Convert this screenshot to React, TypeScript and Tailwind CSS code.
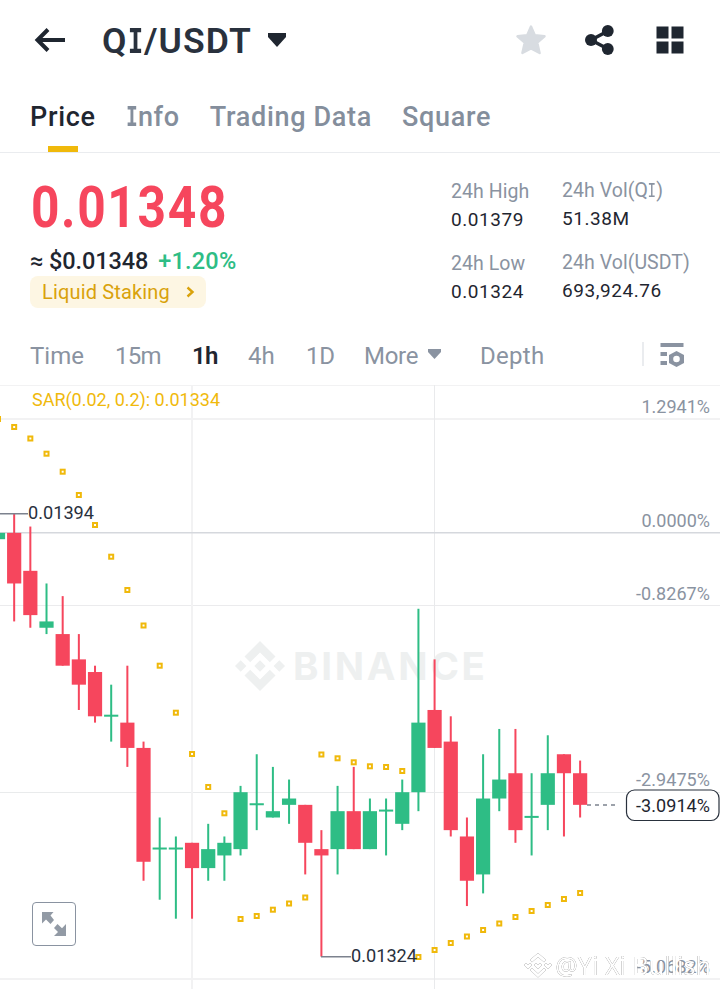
import React, { useState } from "react";

type Candle = [open: number, close: number, high: number, low: number];

// prices are in units of 0.00001, oldest first
const candles: Candle[] = [
  [1390, 1391, 1391, 1390],
  [1391, 1383, 1394, 1377],
  [1385, 1378, 1392, 1376],
  [1376, 1377, 1383, 1375],
  [1375, 1370, 1381, 1370],
  [1371, 1367, 1375, 1363],
  [1369, 1362, 1370, 1361],
  [1362, 1362, 1367, 1358],
  [1361, 1357, 1370, 1354],
  [1357, 1339, 1358, 1336],
  [1341, 1341, 1346, 1333],
  [1341, 1341, 1343, 1330],
  [1342, 1338, 1342, 1330],
  [1338, 1341, 1345, 1336],
  [1340, 1342, 1343, 1336],
  [1341, 1350, 1351, 1340],
  [1348, 1348, 1356, 1344],
  [1346, 1347, 1354, 1346],
  [1348, 1349, 1352, 1345],
  [1348, 1342, 1348, 1337],
  [1341, 1340, 1344, 1324],
  [1341, 1347, 1351, 1337],
  [1347, 1341, 1354, 1341],
  [1341, 1347, 1349, 1341],
  [1347, 1347, 1349, 1340],
  [1345, 1350, 1352, 1344],
  [1350, 1361, 1379, 1347],
  [1363, 1357, 1371, 1357],
  [1358, 1344, 1362, 1343],
  [1343, 1336, 1346, 1332],
  [1337, 1349, 1356, 1334],
  [1349, 1352, 1360, 1347],
  [1353, 1344, 1360, 1342],
  [1346, 1346, 1353, 1340],
  [1348, 1353, 1359, 1344],
  [1356, 1353, 1356, 1343],
  [1353, 1348, 1355, 1346],
];

// parabolic SAR, one y per candle
const sar = [
  34, 42, 53.5, 68.7, 86.7, 110, 140, 171.7, 205, 240.5, 280.7, 327.7, 369, 402, 428.3, 534, 531, 524.7, 518.5,
  512.5, 369.5, 373.3, 377.3, 381.3, 382, 386, 572, 565, 558, 551.5, 545, 538.5, 532, 526, 520, 514, 508,
];

const scaleLabels = [
  { y: 28, text: "1.2941%" },
  { y: 142, text: "0.0000%" },
  { y: 215, text: "-0.8267%" },
  { y: 401, text: "-2.9475%" },
  { y: 588, text: "-5.0682%" },
];

const tabs = ["Price", "Info", "Trading Data", "Square"];

const candleX = (i: number) => -2 + i * 16.17;
const priceY = (p: number) => 128.9 + (1394 - p) * 6.325;

// capital I with slab serifs, the rest of the string stays in the UI font
function SlabI({ text, bold }: { text: string; bold?: boolean }) {
  const at = text.indexOf("I");
  if (at < 0) return <>{text}</>;
  return (
    <span className="whitespace-nowrap">
      {text.slice(0, at)}
      <span
        className={`mx-[-0.08em] inline-block scale-x-75 font-['DejaVu_Sans_Mono',monospace] text-[0.97em] leading-none ${
          bold ? "font-bold" : "font-normal"
        }`}
      >
        I
      </span>
      {text.slice(at + 1)}
    </span>
  );
}

function BackIcon() {
  return (
    <svg width="32" height="26" viewBox="0 0 32 26" fill="none" stroke="#1f2630" strokeWidth="4">
      <path d="M2.5 13H31M14 2.5L3.5 13L14 23.5" />
    </svg>
  );
}

function Header() {
  return (
    <header className="flex h-20 items-center pl-[34px] pr-9 text-[#1f2630]">
      <BackIcon />
      <h1 className="mt-1 ml-[36px] w-[152px] text-[35.5px] leading-none font-semibold tracking-[1.1px] whitespace-nowrap text-[#29313d]">
        <SlabI text="QI/USDT" bold />
      </h1>
      <svg className="ml-[13px]" width="20" height="14" viewBox="0 0 20 14" fill="currentColor">
        <path d="M1 0H19V4L10 14L1 4Z" />
      </svg>
      <svg className="ml-auto" width="30" height="30" viewBox="0 0 30 30">
        <path
          d="M15 1.5L18.8 10.2L28.5 11.3L21.3 17.7L23.6 28L15 23.5L6.4 28L8.7 17.7L1.5 11.3L11.2 10.2Z"
          fill="#d8dce1"
          stroke="#d8dce1"
          strokeWidth="2.4"
          strokeLinejoin="round"
        />
      </svg>
      <svg className="ml-[39px]" width="30" height="30" viewBox="0 0 30 30" fill="currentColor">
        <path d="M6 15L23 6M6 15L23 24" stroke="currentColor" strokeWidth="3.6" />
        <circle cx="6" cy="15" r="6" />
        <circle cx="22.8" cy="6" r="5.9" />
        <circle cx="22.8" cy="24" r="5.9" />
      </svg>
      <svg className="ml-[41px]" width="28" height="28" viewBox="0 0 28 28" fill="currentColor">
        <path d="M.5 .5H12.5V12.5H.5ZM15.5 .5H27.5V12.5H15.5ZM.5 15.5H12.5V27.5H.5ZM15.5 15.5H27.5V27.5H15.5Z" />
      </svg>
    </header>
  );
}

function Stat({ label, value }: { label: string; value: string }) {
  return (
    <div className="h-[72px] whitespace-nowrap">
      <div className="text-[19.5px] leading-7 tracking-[0.05px] text-[#8a93a1]">
        <SlabI text={label} />
      </div>
      <div className="text-[19px] leading-7 tracking-[0.55px] text-[#1f2630]">{value}</div>
    </div>
  );
}

function Summary() {
  return (
    <section className="flex h-[174px]">
      <div className="w-[451px] pl-[30px]">
        <div className="mt-[23px] h-[64px] w-fit origin-left scale-x-88 pl-[1px] text-[56.5px] leading-[64px] font-bold tracking-[1.9px] text-[#f6465d]">
          0.01348
        </div>
        <div className="mt-2 flex h-7 items-center gap-2.5 text-[23.5px] font-medium tracking-[-0.1px] whitespace-nowrap">
          <span className="text-[#1f2630]">≈ $0.01348</span>
          <span className="tracking-[0.2px] text-[#2ebd85]">+1.20%</span>
        </div>
        <button className="flex h-8 w-44 items-center rounded-lg bg-[#fdf6e3] pl-3 text-[20px] tracking-[0.15px] text-[#d9a20b]">
          Liquid Staking
          <svg className="mr-[11px] ml-auto" width="9" height="12" viewBox="0 0 9 12" fill="none" stroke="currentColor" strokeWidth="2.4">
            <path d="M1.5 1.5L6.5 6L1.5 10.5" />
          </svg>
        </button>
      </div>
      <div className="w-[111px] pt-[25px]">
        <Stat label="24h High" value="0.01379" />
        <Stat label="24h Low" value="0.01324" />
      </div>
      <div className="pt-6">
        <Stat label="24h Vol(QI)" value="51.38M" />
        <Stat label="24h Vol(USDT)" value="693,924.76" />
      </div>
    </section>
  );
}

const intervals = [
  { name: "Time", width: "w-[85px]" },
  { name: "15m", width: "w-[77px] tracking-[-0.8px]" },
  { name: "1h", width: "w-14 tracking-[-0.8px]" },
  { name: "4h", width: "w-[58px]" },
  { name: "1D", width: "w-[58px] tracking-[-0.3px]" },
];

function IntervalBar() {
  const [interval, setInterval] = useState("1h");

  return (
    <div className="flex h-[58px] items-center pl-[30px] text-[24px] whitespace-nowrap text-[#8a93a1]">
      {intervals.map(({ name, width }) => (
        <button
          key={name}
          onClick={() => setInterval(name)}
          className={`${width} text-left ${interval === name ? "font-semibold text-[#1f2630]" : ""}`}
        >
          {name}
        </button>
      ))}
      <button className="flex w-[116px] items-center gap-[9px] tracking-[-0.3px]">
        More
        <svg className="-mt-1" width="14" height="10" viewBox="0 0 14 10" fill="currentColor">
          <path d="M1 0H14V3L7.5 10L1 3Z" />
        </svg>
      </button>
      <button className="tracking-[0.3px]">Depth</button>
      <div className="mb-1 ml-auto h-6 w-0.5 bg-[#eaecef]" />
      <svg className="mr-9 mb-0.5 ml-4" width="24" height="24" viewBox="0 0 24 24" fill="currentColor">
        <path d="M.5 0H23.5V4H.5ZM.5 9H7V13H.5ZM.5 18H7V22H.5Z" />
        <path d="M16.500 8L24 12V20L16.500 24L9 20V12ZM16.500 12.700A3.300 3.300 0 1 0 16.500 19.300A3.300 3.300 0 1 0 16.500 12.700Z" fillRule="evenodd" />
      </svg>
    </div>
  );
}

function Chart() {
  return (
    <div className="relative h-[604px] overflow-hidden">
      <svg className="block font-['Roboto',sans-serif] text-[18px]" width="720" height="604" viewBox="0 0 720 604">
        <g fill="#f2f2f3">
          <rect x="0" y="-1" width="720" height="2" />
          <rect x="0" y="33" width="720" height="2" />
          <rect x="0" y="220" width="720" height="1" fill="#ebebed" />
          <rect x="0" y="407" width="720" height="1" fill="#e9ebec" />
          <rect x="0" y="593" width="720" height="2" />
          <rect x="191" y="0" width="2" height="604" />
          <rect x="434" y="0" width="1" height="604" fill="#e9eaec" />
        </g>
        <rect x="0" y="147" width="720" height="1.5" fill="#d5d8dd" />

        <g fill="#eef0f0">
          <path
            transform="translate(235 256)"
            d="M25 0L40.5 15.5L34.8 21.2L25 11.4L15.2 21.2L9.5 15.5ZM25 50L40.5 34.5L34.8 28.8L25 38.6L15.2 28.8L9.5 34.5ZM0 25L5.7 19.3L11.4 25L5.7 30.7ZM38.6 25L44.3 19.3L50 25L44.3 30.7ZM19.3 25L25 19.3L30.7 25L25 30.7Z"
          />
          <text x="293" y="295" textLength="192" className="font-['Inter',sans-serif] text-[38.5px] font-bold">
            BINANCE
          </text>
        </g>

        {candles.map(([open, close, high, low], i) => {
          const x = candleX(i);
          const top = priceY(Math.max(open, close));
          const height = Math.abs(open - close) * 6.325;
          return (
            <g key={i} fill={close >= open ? "#2ebd85" : "#f6465d"}>
              <rect x={x - 1} y={priceY(high)} width="2" height={(high - low) * 6.325} />
              <rect x={x - 7.1} y={height ? top : top - 1.6} width="14.2" height={height || 2} />
            </g>
          );
        })}

        {sar.map((y, i) => (
          <rect key={i} x={candleX(i) - 2} y={y - 2} width="4" height="4" fill="#fff" stroke="#f0b90b" strokeWidth="2" />
        ))}

        <g fill="#7c828e">
          <rect x="0" y="128" width="28" height="1.5" />
          <rect x="321" y="571" width="30" height="1.5" />
        </g>
        <g fill="#29313d">
          <text x="28" y="134" textLength="66" lengthAdjust="spacingAndGlyphs">0.01394</text>
          <text x="351" y="577" textLength="66" lengthAdjust="spacingAndGlyphs">0.01324</text>
        </g>
        <text x="32" y="21" textLength="188" fill="#f0b90b">SAR(0.02, 0.2): 0.01334</text>

        <g fill="#8a93a1" textAnchor="end">
          {scaleLabels.map(({ y, text }) => (
            <text key={text} x="710" y={y} textLength={text.startsWith("-") ? 74 : 68.5}>{text}</text>
          ))}
        </g>
        <path d="M587 420H617" stroke="#7c828e" strokeWidth="1.5" strokeDasharray="4 4" />
        <rect x="626.5" y="405" width="92.5" height="30.5" rx="8" fill="#fff" stroke="#29313d" strokeWidth="1.2" />
        <text x="636" y="427" textLength="74" fill="#1f2630">-3.0914%</text>
      </svg>

      <button className="absolute top-[517px] left-8 flex h-11 w-11 items-center justify-center rounded border border-[#8a93a1] bg-white text-[#929aa5]">
        <svg width="24" height="24" viewBox="0 0 24 24" fill="currentColor">
          <path d="M0 0H11.5L8.5 3.5L12 8L8.5 12L4 7.5L0 11.5ZM24 24H12L16 20L12 16L15.5 12L20 16.2L24 12Z" />
        </svg>
      </button>

      <div className="absolute top-[564px] right-[9px] flex items-center gap-[3px] text-white [filter:drop-shadow(0_0_0.6px_#555)]">
        <svg width="28" height="25" viewBox="0 0 28 25" fill="none" stroke="currentColor" strokeWidth="3">
          <path d="M7 8L14 2L21 8M1 11L4 14L7 11M21 11L24 14L27 11M11 11L14 14L17 11M7 16L14 22.5L21 16" />
        </svg>
        <span className="font-['Noto_Sans',sans-serif] text-[25px] leading-8 whitespace-nowrap">@Yi Xi Bullish</span>
      </div>
    </div>
  );
}

export default function App() {
  const [activeTab, setActiveTab] = useState("Price");

  return (
    <div className="h-[989px] w-[720px] overflow-hidden bg-white font-['Roboto',sans-serif]">
      <Header />
      <nav className="flex h-[73px] gap-[30px] border-b border-[#eaecef] pl-[30px]">
        {tabs.map((tab) => (
          <button
            key={tab}
            onClick={() => setActiveTab(tab)}
            className={`relative flex h-[72px] items-center pt-0.5 text-[27px] font-medium tracking-[0.68px] ${
              activeTab === tab ? "text-[#1f2630]" : "text-[#848e9c]"
            }`}
          >
            <SlabI text={tab} bold />
            {activeTab === tab && <span className="absolute bottom-0 left-[18px] h-1.5 w-[30px] bg-[#f0b90b]" />}
          </button>
        ))}
      </nav>
      <Summary />
      <IntervalBar />
      <Chart />
    </div>
  );
}
